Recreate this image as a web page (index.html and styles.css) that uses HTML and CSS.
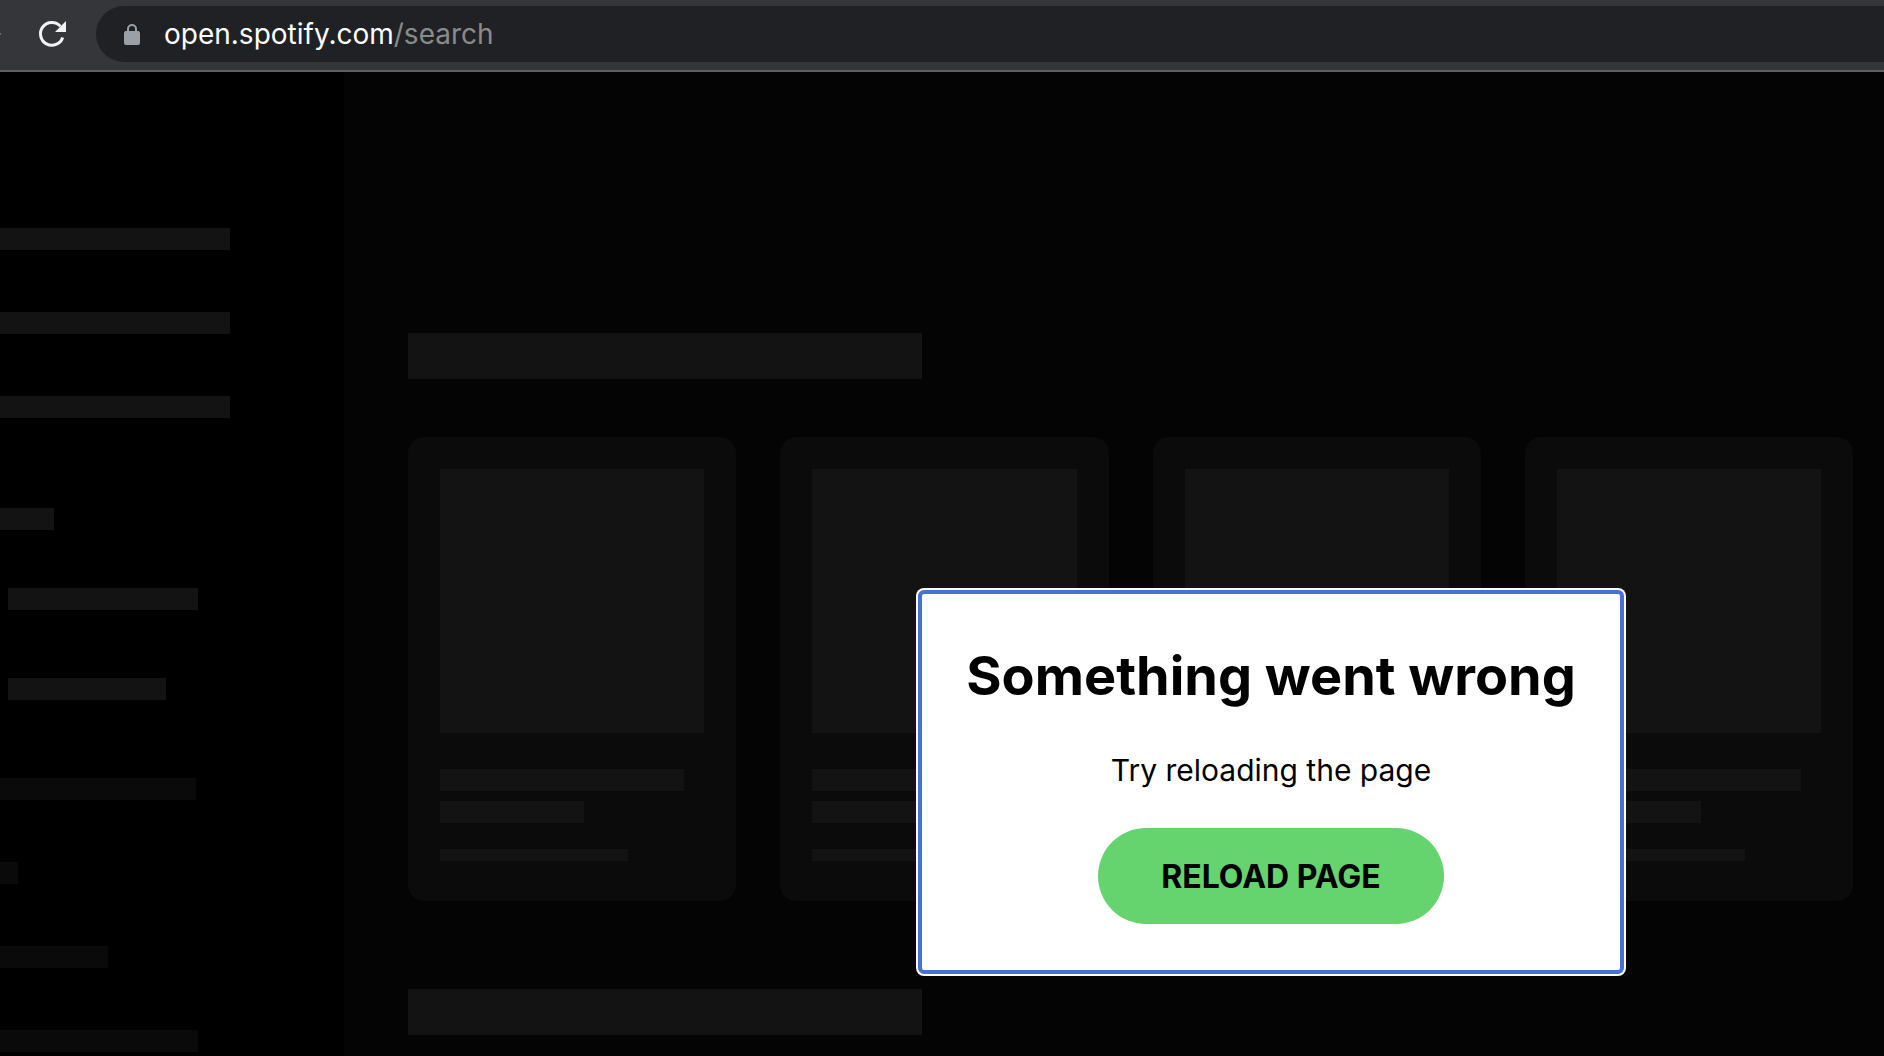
FILE: index.html
```html
<!DOCTYPE html>
<html lang="en">
	<head>
		<meta charset="utf-8">
		<title>Spotify - Search</title>

		<link rel="stylesheet" href="styles.css">
	</head>

	<body>
		<header class="toolbar">
			<button class="forward" type="button" aria-label="Forward">
				<svg width="28" height="28" viewBox="0 0 28 28">
					<path d="M1 14H25M14 2.5L26 14 14 25.5" fill="none" stroke="#8a8b8d" stroke-width="3"/>
				</svg>
			</button>
			<button class="reload" type="button" aria-label="Reload">
				<svg width="28" height="28" viewBox="0 0 28 28">
					<path d="M24.7 17.4A11.4 11.4 0 1 1 22.4 6.2" fill="none" stroke="#f1f3f4" stroke-width="3"/>
					<path d="M28 1V12H17z" fill="#f1f3f4"/>
				</svg>
			</button>
			<div class="address">
				<svg class="lock" width="16" height="22" viewBox="0 0 16 22">
					<path d="M4 9V6a4 4 0 0 1 8 0V9" fill="none" stroke="#9aa0a6" stroke-width="2"/>
					<rect y="8" width="16" height="14" rx="2" fill="#9aa0a6"/>
				</svg>
				<a class="url" href="#">open.spotify.com<span>/search</span></a>
			</div>
		</header>

		<div class="app">
			<nav class="sidebar">
				<div class="group links">
					<div class="bar"></div>
					<div class="bar"></div>
					<div class="bar"></div>
				</div>
				<div class="group actions">
					<div class="bar title"></div>
					<div class="bar create"></div>
					<div class="bar liked"></div>
				</div>
				<div class="group playlists">
					<div class="bar" style="width: 196px"></div>
					<div class="bar" style="width: 18px"></div>
					<div class="bar" style="width: 108px"></div>
					<div class="bar" style="width: 198px"></div>
				</div>
			</nav>

			<main class="content">
				<section class="shelf">
					<div class="heading"></div>
					<div class="cards">
						<div class="card">
							<div class="cover"></div>
							<div class="line"></div>
							<div class="line short"></div>
							<div class="line thin"></div>
						</div>
						<div class="card">
							<div class="cover"></div>
							<div class="line"></div>
							<div class="line short"></div>
							<div class="line thin"></div>
						</div>
						<div class="card">
							<div class="cover"></div>
							<div class="line"></div>
							<div class="line short"></div>
							<div class="line thin"></div>
						</div>
						<div class="card">
							<div class="cover"></div>
							<div class="line"></div>
							<div class="line short"></div>
							<div class="line thin"></div>
						</div>
					</div>
				</section>
				<section class="shelf">
					<div class="heading"></div>
				</section>
			</main>

			<div class="dialog" role="alertdialog" aria-labelledby="headline" aria-describedby="message">
				<h1 id="headline">Something went wrong</h1>
				<p id="message">Try reloading the page</p>
				<button class="reload-page" type="button">RELOAD PAGE</button>
			</div>
		</div>

		<script>
			document.querySelector(".reload-page").addEventListener("click", function () {
				location.reload();
			});
		</script>
	</body>
</html>
```

FILE: styles.css
```css
/* general styling */
* {
	box-sizing: border-box;
	margin: 0;
	padding: 0;
}

html, body {
	height: 100%;
}

body {
	background-color: #000;
	display: flex;
	flex-direction: column;
	font-family: Inter, "Liberation Sans", sans-serif;
	overflow: hidden;
}

button {
	border: 0;
	font-family: inherit;
}

/* browser toolbar */
.toolbar {
	align-items: center;
	background-color: #35363a;
	border-bottom: 2px solid #5f6064;
	display: flex;
	flex: none;
	padding: 6px 0 8px;
}

.forward,
.reload {
	background: none;
	height: 28px;
	width: 28px;
}

/* scrolled off the left edge, only the arrow tip shows */
.forward {
	margin-left: -27px;
	margin-right: 37px;
}

.forward svg,
.reload svg {
	display: block;
}

.address {
	align-items: center;
	background-color: #202124;
	border-radius: 28px 0 0 28px;
	display: flex;
	flex: 1;
	gap: 24px;
	height: 56px;
	margin-left: 30px;
	padding-left: 28px;
}

.url {
	color: #fff;
	font-size: 28px;
	line-height: 32px;
	text-decoration: none;
}

.url span {
	color: #8a8b8d;
}

/* page behind the dialog */
.app {
	display: flex;
	flex: 1;
	min-height: 0;
	overflow: hidden;
	position: relative;
}

.sidebar {
	display: flex;
	flex: none;
	flex-direction: column;
	gap: 90px;
	padding-top: 156px;
	width: 344px;
}

.group {
	display: flex;
	flex-direction: column;
	gap: 62px;
}

.bar {
	background-color: #131313;
	flex: none;
	height: 22px;
}

.links .bar {
	width: 230px;
}

.actions {
	gap: 68px;
	margin-bottom: -12px;
}

.actions .title {
	margin-bottom: -10px;
	width: 54px;
}

.actions .create {
	margin-left: 8px;
	width: 190px;
}

.actions .liked {
	margin-left: 8px;
	width: 158px;
}

.playlists .bar {
	background-color: #0a0a0a;
}

.content {
	background-color: #040404;
	display: flex;
	flex: 1;
	flex-direction: column;
	gap: 88px;
	padding: 261px 31px 0 64px;
}

.heading {
	background-color: #131313;
	height: 46px;
	width: 514px;
}

.cards {
	display: grid;
	gap: 44px;
	grid-template-columns: repeat(4, 1fr);
	margin-top: 58px;
}

.card {
	background-color: #0b0b0b;
	border-radius: 16px;
	padding: 32px 32px 40px;
}

.cover {
	aspect-ratio: 1;
	background-color: #131313;
	margin-bottom: 36px;
}

.line {
	background-color: #131313;
	height: 22px;
	width: 244px;
}

.short {
	margin-top: 10px;
	width: 144px;
}

.thin {
	height: 12px;
	margin-top: 26px;
	width: 188px;
}

/* error dialog */
.dialog {
	align-items: center;
	background-color: #fff;
	border: 4px solid #4673d1;
	border-radius: 6px;
	box-shadow: 0 0 0 2px #fff;
	color: #000;
	display: flex;
	flex-direction: column;
	padding: 46px 0;
	position: absolute;
	right: 260px;
	top: 518px;
	width: 706px;
}

.dialog h1 {
	font-size: 54px;
	font-weight: 700;
	line-height: 72px;
	white-space: nowrap;
}

.dialog p {
	font-size: 30px;
	line-height: 52px;
	margin: 32px 0;
}

.reload-page {
	background-color: #65d36e;
	border-radius: 48px;
	color: #000;
	font-size: 32px;
	font-weight: 700;
	height: 96px;
	width: 346px;
}
```
